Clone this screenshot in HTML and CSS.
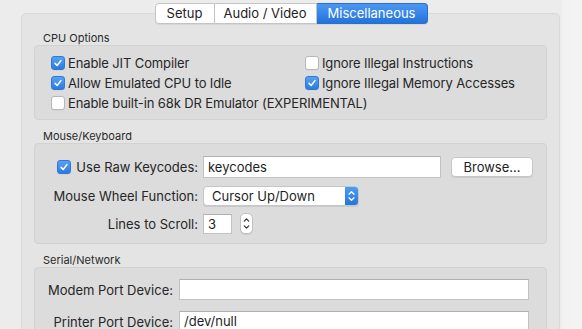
FILE: index.html
```html
<!DOCTYPE html>
<html>
<head>
<meta charset="utf-8">
<link rel="stylesheet" href="styles.css">
</head>
<body>
<div class="window">
  <div class="tabs">
    <div class="tab tab-setup">Setup</div>
    <div class="tab tab-av">Audio / Video</div>
    <div class="tab tab-misc active">Miscellaneous</div>
  </div>
  <div class="panel">
    <div class="group-label">CPU Options</div>
    <div class="group-box cpu">
      <label class="check"><span class="cb on"><svg viewBox="0 0 14 14"><path d="M3.6 7.4 L6 9.9 L10.4 4.2"/></svg></span>Enable JIT Compiler</label>
      <label class="check"><span class="cb"></span>Ignore Illegal Instructions</label>
      <label class="check"><span class="cb on"><svg viewBox="0 0 14 14"><path d="M3.6 7.4 L6 9.9 L10.4 4.2"/></svg></span>Allow Emulated CPU to Idle</label>
      <label class="check"><span class="cb on"><svg viewBox="0 0 14 14"><path d="M3.6 7.4 L6 9.9 L10.4 4.2"/></svg></span>Ignore Illegal Memory Accesses</label>
      <label class="check span2"><span class="cb"></span>Enable built-in 68k DR Emulator (EXPERIMENTAL)</label>
    </div>

    <div class="group-label">Mouse/Keyboard</div>
    <div class="group-box mk">
      <div class="row row-keys">
        <div class="lbl"><span class="cb on"><svg viewBox="0 0 14 14"><path d="M3.6 7.4 L6 9.9 L10.4 4.2"/></svg></span><span class="gap5">Use Raw Keycodes:</span></div>
        <div class="field f-keys">keycodes</div>
        <div class="button">Browse...</div>
      </div>
      <div class="row row-wheel">
        <div class="lbl">Mouse Wheel Function:</div>
        <div class="popup"><span class="popup-text">Cursor Up/Down</span><span class="popup-arrows"><svg viewBox="0 0 13 18"><path d="M4 7.3 L6.5 4.8 L9 7.3 M4 10.7 L6.5 13.2 L9 10.7"/></svg></span></div>
      </div>
      <div class="row row-lines">
        <div class="lbl">Lines to Scroll:</div>
        <div class="field f-lines">3</div>
        <div class="stepper"><svg viewBox="0 0 11 19"><path d="M3.3 7.2 L5.5 4.9 L7.7 7.2 M3.3 11.8 L5.5 14.1 L7.7 11.8"/></svg></div>
      </div>
    </div>

    <div class="group-label">Serial/Network</div>
    <div class="group-box serial">
      <div class="row">
        <div class="lbl lbl-s">Modem Port Device:</div>
        <div class="field f-port"></div>
      </div>
      <div class="row">
        <div class="lbl lbl-s">Printer Port Device:</div>
        <div class="field f-port">/dev/null</div>
      </div>
    </div>
  </div>
</div>
</body>
</html>
```

FILE: styles.css
```css
html, body {
  margin: 0;
  padding: 0;
  height: 329px;
  overflow: hidden;
}
body {
  background: linear-gradient(to right, #ececec 0, #ececec 561px, #f2f2f2 563px, #f4f4f4 100%);
  font-family: "Inter", "Liberation Sans", sans-serif;
  font-size: 13px;
  color: #262626;
}
.window {
  padding-top: 3px;
}
.tabs {
  position: relative;
  z-index: 1;
  display: flex;
  justify-content: center;
  height: 21px;
}
.tab {
  height: 19px;
  line-height: 19px;
  text-align: center;
  background: #fff;
  border: 1px solid #c4c4c4;
  border-left: none;
  box-sizing: content-box;
  font-size: 13px;
  color: #222;
  box-shadow: 0 1px 0 rgba(0,0,0,0.06);
}
.tab-setup {
  width: 58px;
  border-left: 1px solid #c4c4c4;
  border-radius: 4px 0 0 4px;
}
.tab-av {
  width: 101px;
}
.tab-misc {
  width: 110px;
  border-radius: 0 4px 4px 0;
}
.tab.active {
  background: linear-gradient(#4b98f2, #2273dc);
  border-color: #2a6fcc;
  color: #fff;
}
.panel {
  margin: -11px 22px 0 21px;
  padding: 17px 12px 0 12px;
  height: 400px;
  background: #e4e4e4;
  border: 1px solid #d9d9d9;
  border-radius: 5px;
}
.group-label {
  font-size: 11px;
  line-height: 14px;
  height: 14px;
  padding-left: 9px;
  color: #2a2a2a;
}
.group-box {
  background: #dcdcdc;
  border: 1px solid #d2d2d2;
  border-radius: 4px;
  margin-bottom: 9px;
}
.cpu {
  display: grid;
  grid-template-columns: 254px 1fr;
  grid-auto-rows: 20px;
  padding: 7px 0 6px 16px;
}
.span2 {
  grid-column: 1 / 3;
}
.check {
  display: flex;
  align-items: center;
  gap: 3px;
  white-space: nowrap;
  letter-spacing: -0.12px;
}
.cb {
  width: 14px;
  height: 14px;
  box-sizing: border-box;
  border-radius: 3px;
  background: #fff;
  border: 1px solid #b8b8b8;
  display: inline-flex;
  flex: none;
  box-shadow: 0 0.5px 0 rgba(0,0,0,0.08);
}
.cb.on {
  background: linear-gradient(#56a2f3, #2b7be0);
  border-color: #2f78d6;
}
.cb svg {
  width: 12px;
  height: 12px;
  fill: none;
  stroke: #fff;
  stroke-width: 1.8;
  stroke-linecap: round;
  stroke-linejoin: round;
}
.mk {
  padding: 12px 0 9px 0;
}
.row {
  display: flex;
  align-items: center;
}
.mk .row-wheel {
  margin-top: 8px;
}
.mk .row-lines {
  margin-top: 7px;
}
.lbl {
  width: 163px;
  flex: none;
  display: flex;
  justify-content: flex-end;
  align-items: center;
  white-space: nowrap;
  margin-right: 5px;
}
.gap5 {
  margin-left: 5px;
}
.lbl-s {
  width: 138px;
  margin-right: 6px;
}
.field {
  background: #fff;
  border: 1px solid #c2c2c2;
  border-top-color: #b0b0b0;
  box-sizing: border-box;
  height: 22px;
  line-height: 20px;
  padding-left: 4px;
  color: #1e1e1e;
}
.f-keys {
  width: 238px;
}
.button {
  margin-left: 10px;
  width: 82px;
  height: 20px;
  line-height: 19px;
  box-sizing: border-box;
  text-align: center;
  background: #fff;
  border: 1px solid #c6c6c6;
  border-radius: 4px;
  box-shadow: 0 1px 0 rgba(0,0,0,0.08);
  color: #222;
}
.popup {
  width: 156px;
  height: 20px;
  box-sizing: border-box;
  display: flex;
  background: #fff;
  border: 1px solid #c6c6c6;
  border-radius: 4px;
  box-shadow: 0 1px 0 rgba(0,0,0,0.08);
  overflow: hidden;
}
.popup-text {
  flex: 1;
  padding-left: 8px;
  line-height: 18px;
  color: #1e1e1e;
}
.popup-arrows {
  width: 13px;
  background: linear-gradient(#4f9cf3, #2474dc);
  display: flex;
  align-items: center;
}
.popup-arrows svg {
  width: 13px;
  height: 18px;
  fill: none;
  stroke: #fff;
  stroke-width: 1.3;
  stroke-linecap: round;
  stroke-linejoin: round;
}
.f-lines {
  width: 29px;
  height: 20px;
  line-height: 18px;
}
.stepper {
  margin-left: 8px;
  width: 13px;
  height: 21px;
  box-sizing: border-box;
  background: #fff;
  border: 1px solid #c0c0c0;
  border-radius: 5px;
  box-shadow: 0 1px 0 rgba(0,0,0,0.08);
  display: flex;
}
.stepper svg {
  width: 11px;
  height: 19px;
  fill: none;
  stroke: #333;
  stroke-width: 1.2;
  stroke-linecap: round;
  stroke-linejoin: round;
}
.serial {
  padding: 11px 0 10px 0;
}
.serial .row + .row {
  margin-top: 11px;
}
.f-port {
  width: 350px;
  height: 21px;
  line-height: 19px;
}
```
